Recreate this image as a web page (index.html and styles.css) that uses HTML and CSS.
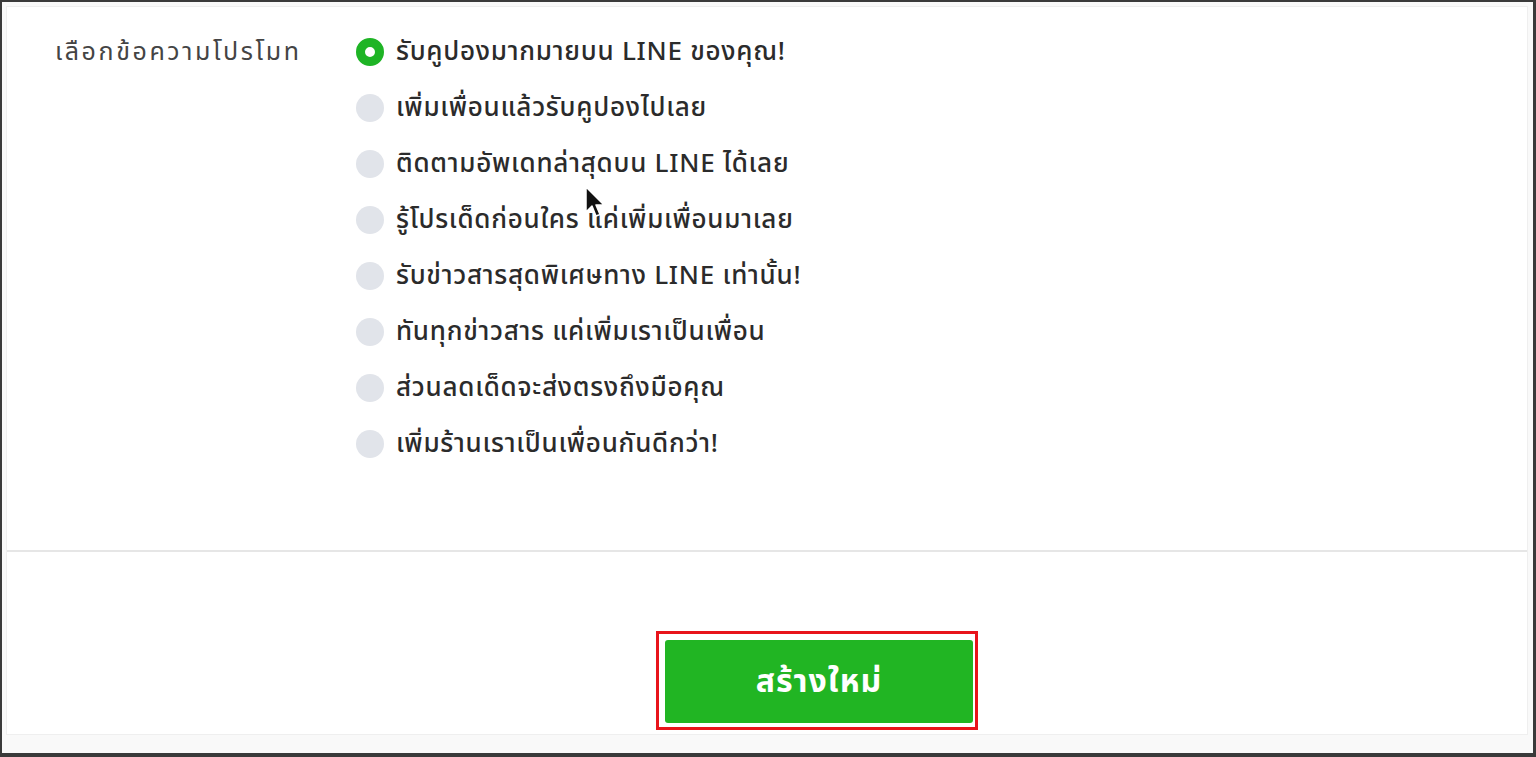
FILE: index.html
```html
<!DOCTYPE html>
<html lang="th">
<head>
<meta charset="utf-8">
<title>เลือกข้อความโปรโมท</title>
<link rel="stylesheet" href="styles.css">
</head>
<body>
<div class="frame">
  <div class="panel">
    <section class="form-row">
      <div class="label">เลือกข้อความโปรโมท</div>
      <ul class="options">
        <li class="option"><span class="radio checked"></span><span class="opt-text">รับคูปองมากมายบน LINE ของคุณ!</span></li>
        <li class="option"><span class="radio"></span><span class="opt-text">เพิ่มเพื่อนแล้วรับคูปองไปเลย</span></li>
        <li class="option"><span class="radio"></span><span class="opt-text">ติดตามอัพเดทล่าสุดบน LINE ได้เลย</span></li>
        <li class="option"><span class="radio"></span><span class="opt-text">รู้โปรเด็ดก่อนใคร แค่เพิ่มเพื่อนมาเลย</span></li>
        <li class="option"><span class="radio"></span><span class="opt-text">รับข่าวสารสุดพิเศษทาง LINE เท่านั้น!</span></li>
        <li class="option"><span class="radio"></span><span class="opt-text">ทันทุกข่าวสาร แค่เพิ่มเราเป็นเพื่อน</span></li>
        <li class="option"><span class="radio"></span><span class="opt-text">ส่วนลดเด็ดจะส่งตรงถึงมือคุณ</span></li>
        <li class="option"><span class="radio"></span><span class="opt-text">เพิ่มร้านเราเป็นเพื่อนกันดีกว่า!</span></li>
      </ul>
      <svg class="cursor" width="22" height="34" viewBox="0 0 22 34" aria-hidden="true">
        <path d="M1 1 L1 26 L7 20 L11 30 L15 28.5 L11 19 L19 19 Z" fill="#111" stroke="#fff" stroke-width="1.5" stroke-linejoin="round"/>
      </svg>
    </section>
    <footer class="footer">
      <div class="highlight">
        <button class="btn-create" type="button">สร้างใหม่</button>
      </div>
    </footer>
  </div>
</div>
</body>
</html>
```

FILE: styles.css
```css
* { box-sizing: border-box; }

html, body {
  margin: 0;
  padding: 0;
}

body {
  width: 1536px;
  height: 757px;
  overflow: hidden;
  font-family: "Noto Sans Thai", "Noto Sans", "Liberation Sans", sans-serif;
  color: #333;
}

.frame {
  width: 1536px;
  height: 757px;
  border-style: solid;
  border-color: #3a3a3a;
  border-width: 2px 3px 4px 2px;
  background: #f9f9f9;
  padding: 4px 5px 18px 4px;
}

.panel {
  height: 100%;
  background: #fff;
  border: 1px solid #efefef;
  display: flex;
  flex-direction: column;
}

.form-row {
  position: relative;
  display: flex;
  padding: 29px 0 0 48px;
  height: 545px;
  border-bottom: 2px solid #e6e6e6;
}

.label {
  width: 301px;
  font-size: 25px;
  line-height: 32px;
  letter-spacing: 2.6px;
  color: #444;
}

.options {
  list-style: none;
  margin: 0;
  padding: 0;
  display: flex;
  flex-direction: column;
  gap: 24px;
}

.option {
  display: flex;
  align-items: center;
  height: 32px;
}

.radio {
  width: 28px;
  height: 28px;
  border-radius: 50%;
  background: #e1e4ea;
  margin-right: 12px;
  flex: none;
}

.radio.checked {
  background: #fff;
  border: 9px solid #1eb425;
}

.opt-text {
  font-size: 26px;
  line-height: 32px;
  letter-spacing: 0.75px;
  color: #2b2b2b;
  font-weight: 500;
  white-space: nowrap;
}

.cursor {
  position: absolute;
  left: 578px;
  top: 179px;
}

.footer {
  flex: 1;
  display: flex;
  justify-content: center;
  align-items: flex-start;
  padding: 79px 0 0 100px;
}

.highlight {
  border: 3px solid #e8141b;
  padding: 6px 2px 4px 6px;
  background: #fff;
}

.btn-create {
  display: block;
  width: 308px;
  height: 83px;
  border: none;
  border-radius: 3px;
  background: #21b523;
  color: #fff;
  font-family: "Noto Sans Thai", "Noto Sans", "Liberation Sans", sans-serif;
  font-size: 32px;
  letter-spacing: 1px;
  font-weight: 700;
  cursor: pointer;
}
```
